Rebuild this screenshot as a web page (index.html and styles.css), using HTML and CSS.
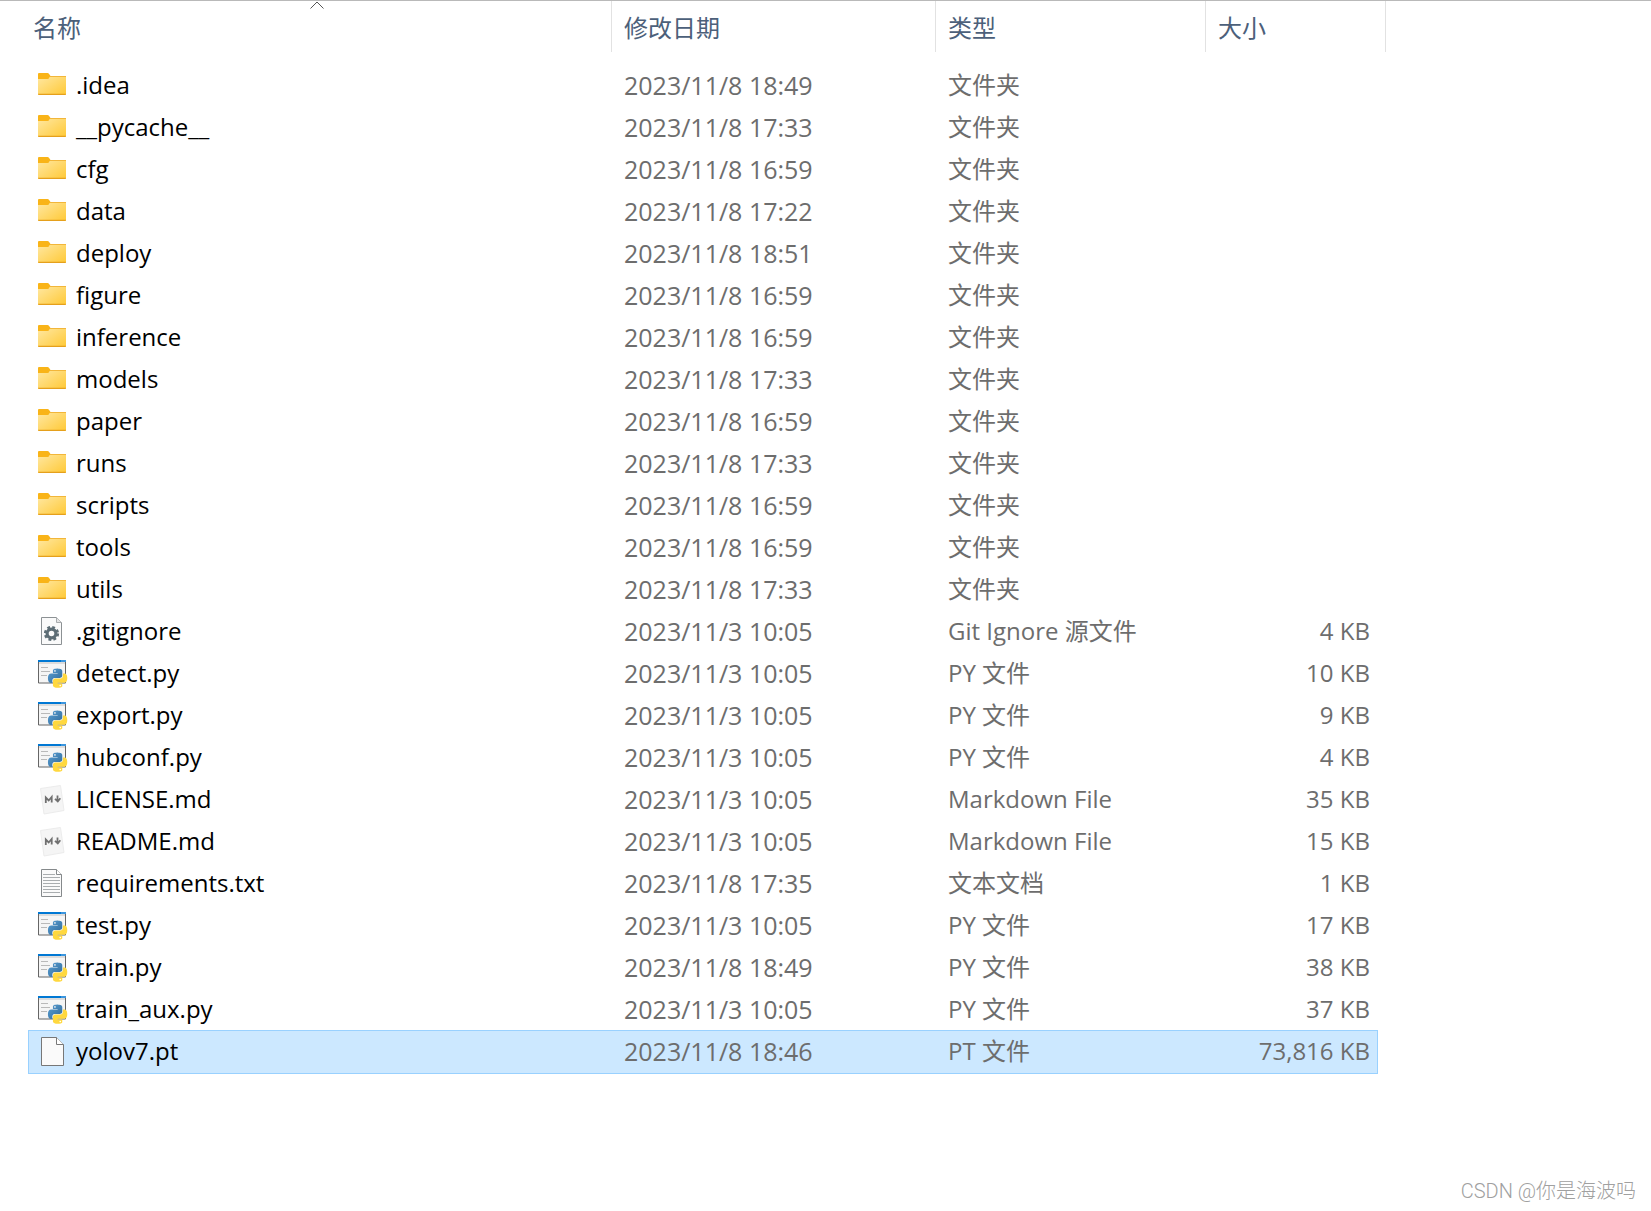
FILE: index.html
```html
<!DOCTYPE html>
<html lang="zh-CN">
<head>
    <meta charset="UTF-8">
    <meta name="viewport" content="width=device-width, initial-scale=1.0">
    <title>yolov7</title>
    <link rel="stylesheet" href="styles.css">
</head>
<body>
    <!-- icon sprites -->
    <svg class="sprites" aria-hidden="true">
        <defs>
            <linearGradient id="folder-fill" x1="0" y1="0" x2="1" y2="1">
                <stop offset="0" stop-color="#ffe8a3"/>
                <stop offset="1" stop-color="#ffc936"/>
            </linearGradient>
            <linearGradient id="py-blue" x1="0" y1="0" x2="1" y2="1">
                <stop offset="0" stop-color="#5a9fd4"/>
                <stop offset="1" stop-color="#306998"/>
            </linearGradient>
            <path id="snake" d="M14.25.18l.9.2.73.26.59.3.45.32.34.34.25.34.16.33.1.3.04.26.02.2-.01.13V8.5l-.05.63-.13.55-.21.46-.26.38-.3.31-.33.25-.35.19-.35.14-.33.1-.3.07-.26.04-.21.02H8.77l-.69.05-.59.14-.5.22-.41.27-.33.32-.27.35-.2.36-.15.37-.1.35-.07.32-.04.27-.02.21v3.06H3.17l-.21-.03-.28-.07-.32-.12-.35-.18-.36-.26-.36-.36-.35-.46-.32-.59-.28-.73-.21-.88-.14-1.05-.05-1.23.06-1.22.16-1.04.24-.87.32-.71.36-.57.4-.44.42-.33.42-.24.4-.16.36-.1.32-.05.24-.01h.16l.06.01h8.16v-.83H6.18l-.01-2.75-.02-.37.05-.34.11-.31.17-.28.25-.26.31-.23.38-.2.44-.18.51-.15.58-.12.64-.1.71-.06.77-.04.84-.02 1.27.05zm-6.3 1.98l-.23.33-.08.41.08.41.23.34.33.22.41.09.41-.09.33-.22.23-.34.08-.41-.08-.41-.23-.33-.33-.22-.41-.09-.41.09z"/>
        </defs>
        <symbol id="icon-folder" viewBox="0 0 30 30">
            <path d="M0 3q0-1 1-1h8.500q1 0 1.600 1l1.400 2-1.500 3H0z" fill="#f9b418"/>
            <path d="M0 8h9.500q1 0 1.600-.8L12.500 5H27q1 0 1 1v17q0 1-1 1H1q-1 0-1-1z" fill="url(#folder-fill)"/>
            <path d="M0 23q0 1 1 1h26q1 0 1-1v-.3H0z" fill="#e5a01c"/>
            <path d="M12 5.500h16" stroke="#f2b63a"/>
        </symbol>
        <symbol id="icon-gear-file" viewBox="0 0 30 30">
            <path d="M3.500.5h15l5 5v22h-20z" fill="#fafafa" stroke="#8c9194"/>
            <path d="M18.500.5v5h5" fill="#e4e4e4" stroke="#a7abad"/>
            <circle cx="13.500" cy="16.500" r="4.400" fill="none" stroke="#5d6d75" stroke-width="3.200"/>
            <circle cx="13.500" cy="16.500" r="6.400" fill="none" stroke="#5d6d75" stroke-width="2.400" stroke-dasharray="2.800 2.227"/>
        </symbol>
        <symbol id="icon-python" viewBox="0 0 30 30">
            <path d="M.5 2v22h27V2" fill="#f5f5f5" stroke="#666"/>
            <path d="M1 3h26v2H1z" fill="#dcdcdc"/>
            <path d="M0 1h28v2H0z" fill="#0078d4"/>
            <path d="M23 1h5v2h-5z" fill="#3c96de"/>
            <path d="M3 8.500h7M3 12.500h9M3 16.500h6" stroke="#b9b9b9"/>
            <g transform="translate(10 9.600) scale(.8)">
                <use href="#snake" fill="url(#py-blue)"/>
                <use href="#snake" fill="#ffd83f" transform="rotate(180 12 12)"/>
            </g>
        </symbol>
        <symbol id="icon-markdown" viewBox="0 0 30 30">
            <path d="M2.500 3.500l20-3 3.500 25-20 3.500z" fill="#f5f5f5" stroke="#ececec"/>
            <path d="M7.800 18v-5.500l2.900 3 3-3.500v5.500" fill="none" stroke="#707070" stroke-width="1.800"/>
            <path d="M19.500 10.500v5M17 13.800l2.800 2.700 2.500-3.200" fill="none" stroke="#707070" stroke-width="1.800"/>
        </symbol>
        <symbol id="icon-text" viewBox="0 0 30 30">
            <path d="M3.500.5h15l5 5v22h-20z" fill="#fafafa" stroke="#85898b"/>
            <path d="M18.500.5v5h5" fill="#fff" stroke="#85898b"/>
            <path d="M5 5.500h12M5 8.500h17M5 11.500h17M5 14.500h17M5 17.500h17M5 20.500h17M5 23.500h17" stroke="#a9adaf"/>
        </symbol>
        <symbol id="icon-blank" viewBox="0 0 30 30">
            <path d="M3.500.5h15l7 7v21h-22z" fill="#fafafa" stroke="#777"/>
            <path d="M18.500.5v7h7" fill="#fff" stroke="#777"/>
        </symbol>
    </svg>

    <main class="file-list">
        <table>
            <colgroup>
                <col>
                <col class="col-date">
                <col class="col-type">
                <col class="col-size">
            </colgroup>
            <thead>
                <tr>
                    <th class="name" aria-sort="ascending">
                        <button type="button">名称</button>
                        <svg class="sort-arrow" viewBox="0 0 14 8"><path d="M.5 7.500L7 1l6.500 6.500" fill="none" stroke="#555"/></svg>
                    </th>
                    <th><button type="button">修改日期</button></th>
                    <th><button type="button">类型</button></th>
                    <th class="last"><button type="button">大小</button></th>
                </tr>
            </thead>
            <tbody>
                <tr><td><div class="file"><svg><use href="#icon-folder"/></svg>.idea</div></td><td class="date">2023/11/8 18:49</td><td>文件夹</td><td></td></tr>
                <tr><td><div class="file"><svg><use href="#icon-folder"/></svg>__pycache__</div></td><td class="date">2023/11/8 17:33</td><td>文件夹</td><td></td></tr>
                <tr><td><div class="file"><svg><use href="#icon-folder"/></svg>cfg</div></td><td class="date">2023/11/8 16:59</td><td>文件夹</td><td></td></tr>
                <tr><td><div class="file"><svg><use href="#icon-folder"/></svg>data</div></td><td class="date">2023/11/8 17:22</td><td>文件夹</td><td></td></tr>
                <tr><td><div class="file"><svg><use href="#icon-folder"/></svg>deploy</div></td><td class="date">2023/11/8 18:51</td><td>文件夹</td><td></td></tr>
                <tr><td><div class="file"><svg><use href="#icon-folder"/></svg>figure</div></td><td class="date">2023/11/8 16:59</td><td>文件夹</td><td></td></tr>
                <tr><td><div class="file"><svg><use href="#icon-folder"/></svg>inference</div></td><td class="date">2023/11/8 16:59</td><td>文件夹</td><td></td></tr>
                <tr><td><div class="file"><svg><use href="#icon-folder"/></svg>models</div></td><td class="date">2023/11/8 17:33</td><td>文件夹</td><td></td></tr>
                <tr><td><div class="file"><svg><use href="#icon-folder"/></svg>paper</div></td><td class="date">2023/11/8 16:59</td><td>文件夹</td><td></td></tr>
                <tr><td><div class="file"><svg><use href="#icon-folder"/></svg>runs</div></td><td class="date">2023/11/8 17:33</td><td>文件夹</td><td></td></tr>
                <tr><td><div class="file"><svg><use href="#icon-folder"/></svg>scripts</div></td><td class="date">2023/11/8 16:59</td><td>文件夹</td><td></td></tr>
                <tr><td><div class="file"><svg><use href="#icon-folder"/></svg>tools</div></td><td class="date">2023/11/8 16:59</td><td>文件夹</td><td></td></tr>
                <tr><td><div class="file"><svg><use href="#icon-folder"/></svg>utils</div></td><td class="date">2023/11/8 17:33</td><td>文件夹</td><td></td></tr>
                <tr><td><div class="file"><svg><use href="#icon-gear-file"/></svg>.gitignore</div></td><td class="date">2023/11/3 10:05</td><td>Git Ignore 源文件</td><td>4 KB</td></tr>
                <tr><td><div class="file"><svg><use href="#icon-python"/></svg>detect.py</div></td><td class="date">2023/11/3 10:05</td><td>PY 文件</td><td>10 KB</td></tr>
                <tr><td><div class="file"><svg><use href="#icon-python"/></svg>export.py</div></td><td class="date">2023/11/3 10:05</td><td>PY 文件</td><td>9 KB</td></tr>
                <tr><td><div class="file"><svg><use href="#icon-python"/></svg>hubconf.py</div></td><td class="date">2023/11/3 10:05</td><td>PY 文件</td><td>4 KB</td></tr>
                <tr><td><div class="file"><svg><use href="#icon-markdown"/></svg>LICENSE.md</div></td><td class="date">2023/11/3 10:05</td><td>Markdown File</td><td>35 KB</td></tr>
                <tr><td><div class="file"><svg><use href="#icon-markdown"/></svg>README.md</div></td><td class="date">2023/11/3 10:05</td><td>Markdown File</td><td>15 KB</td></tr>
                <tr><td><div class="file"><svg><use href="#icon-text"/></svg>requirements.txt</div></td><td class="date">2023/11/8 17:35</td><td>文本文档</td><td>1 KB</td></tr>
                <tr><td><div class="file"><svg><use href="#icon-python"/></svg>test.py</div></td><td class="date">2023/11/3 10:05</td><td>PY 文件</td><td>17 KB</td></tr>
                <tr><td><div class="file"><svg><use href="#icon-python"/></svg>train.py</div></td><td class="date">2023/11/8 18:49</td><td>PY 文件</td><td>38 KB</td></tr>
                <tr><td><div class="file"><svg><use href="#icon-python"/></svg>train_aux.py</div></td><td class="date">2023/11/3 10:05</td><td>PY 文件</td><td>37 KB</td></tr>
                <tr class="selected"><td><div class="file"><svg><use href="#icon-blank"/></svg>yolov7.pt</div></td><td class="date">2023/11/8 18:46</td><td>PT 文件</td><td>73,816 KB</td></tr>
            </tbody>
        </table>
    </main>

    <footer>CSDN @你是海波吗</footer>
</body>
</html>
```

FILE: styles.css
```css
* {
    box-sizing: border-box;
}
body {
    display: flex;
    flex-direction: column;
    min-height: 100vh;
    margin: 0;
    border-top: 1px solid #b9b9b9;
    background: #fff;
    color: #6d6d6d;
    font-family: "Open Sans", "Noto Sans CJK SC", sans-serif;
    font-size: 24px;
    line-height: 32px;
}
.sprites {
    position: absolute;
    width: 0;
    height: 0;
}
.file-list {
    padding: 0 274px 0 29px;
}
table {
    width: 100%;
    table-layout: fixed;
    border-collapse: collapse;
}
.col-date {
    width: 324px;
}
.col-type {
    width: 270px;
}
.col-size {
    width: 171px;
}

/* header */
th {
    position: relative;
    height: 64px;
    padding: 0;
    vertical-align: top;
}
th button {
    display: block;
    width: 100%;
    height: 51px;
    padding: 2px 12px 0;
    border: none;
    border-right: 1px solid #e2e2e2;
    background: none;
    color: #4c607a;
    font: inherit;
    font-weight: 400;
    text-align: left;
}
th.name button {
    padding-left: 4px;
}
th.last button {
    width: calc(100% + 9px);
}
.sort-arrow {
    position: absolute;
    top: 0;
    left: calc(50% - 11px);
    width: 14px;
    height: 8px;
}

/* rows */
td {
    height: 42px;
    padding: 0 12px 2px;
    white-space: nowrap;
}
td:first-child {
    padding-left: 9px;
    color: #000;
}
td:last-child {
    padding-right: 7px;
    text-align: right;
}
.date {
    font-size: 25px;
}
.file {
    display: flex;
    align-items: center;
    gap: 8px;
}
.file svg {
    flex: none;
    width: 30px;
    height: 30px;
    margin-top: 2px;
}
.selected {
    background: #cce8ff;
    outline: 1px solid #99d1ff;
}

footer {
    margin-top: auto;
    padding: 0 15px 4px;
    color: #a0a0a0;
    font-family: Roboto, "Noto Sans CJK SC", sans-serif;
    font-size: 20px;
    font-weight: 300;
    text-align: right;
}
```
